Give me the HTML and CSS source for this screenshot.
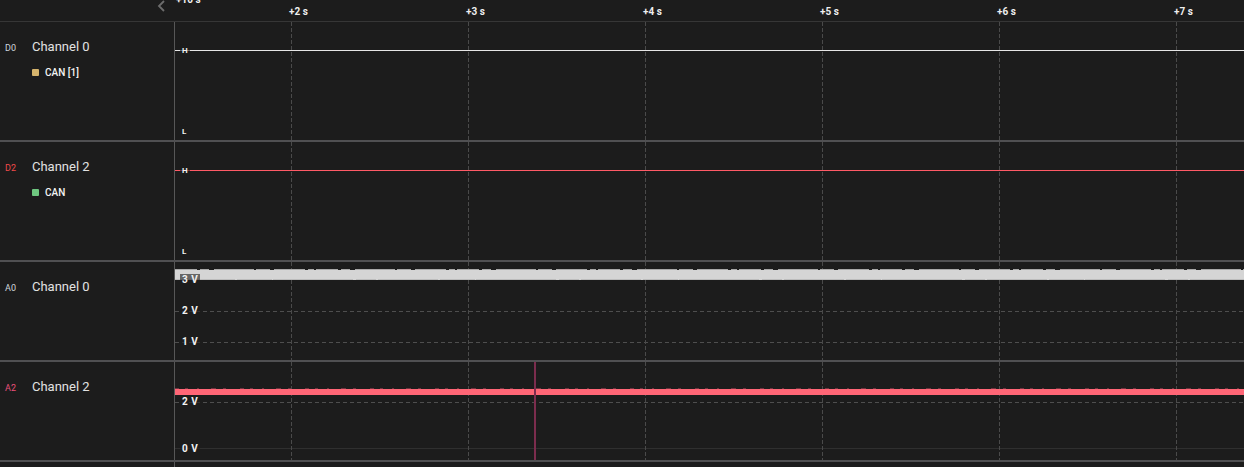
FILE: index.html
```html
<!DOCTYPE html>
<html lang="en">
<head>
    <meta charset="UTF-8">
    <title>Logic capture</title>
    <meta name="viewport" content="width=device-width, initial-scale=1.0">
    <link rel="stylesheet" href="styles.css">
</head>
<body>
<div class="app">
    <div class="ruler">
        <div class="ruler-left">
            <svg class="chevron" width="9" height="12" viewBox="0 0 9 12"><polyline points="7,1 2,6 7,11" fill="none" stroke="#6c6c6c" stroke-width="1.8"/></svg>
        </div>
        <div class="ruler-axis">
            <span class="tick start">+10 s</span>
            <span class="tick" style="left: 115px">+2 s</span>
            <span class="tick" style="left: 292px">+3 s</span>
            <span class="tick" style="left: 469px">+4 s</span>
            <span class="tick" style="left: 646px">+5 s</span>
            <span class="tick" style="left: 823px">+6 s</span>
            <span class="tick" style="left: 1000px">+7 s</span>
        </div>
    </div>

    <div class="channel digital">
        <div class="channel-info">
            <div class="channel-head">
                <span class="channel-id id-d0">D0</span>
                <span class="channel-name">Channel 0</span>
            </div>
            <div class="analyzer"><span class="swatch swatch-gold"></span>CAN [1]</div>
        </div>
        <div class="plot">
            <svg class="grid" width="100%" height="100%">
                <g class="vgrid">
                    <line x1="116.5" y1="0" x2="116.5" y2="118"/>
                    <line x1="293.5" y1="0" x2="293.5" y2="118"/>
                    <line x1="470.5" y1="0" x2="470.5" y2="118"/>
                    <line x1="647.5" y1="0" x2="647.5" y2="118"/>
                    <line x1="824.5" y1="0" x2="824.5" y2="118"/>
                    <line x1="1001.5" y1="0" x2="1001.5" y2="118"/>
                </g>
                <line x1="0" y1="28.5" x2="1100" y2="28.5" stroke="#e6e6e6" stroke-width="1"/>
            </svg>
            <span class="level" style="top: 28px">H</span>
            <span class="level" style="top: 109px">L</span>
        </div>
    </div>

    <div class="channel digital">
        <div class="channel-info">
            <div class="channel-head">
                <span class="channel-id id-d2">D2</span>
                <span class="channel-name">Channel 2</span>
            </div>
            <div class="analyzer"><span class="swatch swatch-green"></span>CAN</div>
        </div>
        <div class="plot">
            <svg class="grid" width="100%" height="100%">
                <g class="vgrid">
                    <line x1="116.5" y1="0" x2="116.5" y2="118"/>
                    <line x1="293.5" y1="0" x2="293.5" y2="118"/>
                    <line x1="470.5" y1="0" x2="470.5" y2="118"/>
                    <line x1="647.5" y1="0" x2="647.5" y2="118"/>
                    <line x1="824.5" y1="0" x2="824.5" y2="118"/>
                    <line x1="1001.5" y1="0" x2="1001.5" y2="118"/>
                </g>
                <line x1="0" y1="28.5" x2="1100" y2="28.5" stroke="#ff5a66" stroke-width="1"/>
            </svg>
            <span class="level" style="top: 28px">H</span>
            <span class="level" style="top: 109px">L</span>
        </div>
    </div>

    <div class="channel analog">
        <div class="channel-info">
            <div class="channel-head">
                <span class="channel-id id-a0">A0</span>
                <span class="channel-name">Channel 0</span>
            </div>
        </div>
        <div class="plot">
            <svg class="grid" width="100%" height="100%">
                <g class="hgrid">
                    <line x1="0" y1="49.5" x2="1100" y2="49.5"/>
                    <line x1="0" y1="80.5" x2="1100" y2="80.5"/>
                </g>
                <g class="vgrid">
                    <line x1="116.5" y1="0" x2="116.5" y2="98"/>
                    <line x1="293.5" y1="0" x2="293.5" y2="98"/>
                    <line x1="470.5" y1="0" x2="470.5" y2="98"/>
                    <line x1="647.5" y1="0" x2="647.5" y2="98"/>
                    <line x1="824.5" y1="0" x2="824.5" y2="98"/>
                    <line x1="1001.5" y1="0" x2="1001.5" y2="98"/>
                </g>
                <line x1="0" y1="7.5" x2="1100" y2="7.5" stroke="#a8a8a8" stroke-width="1" stroke-dasharray="22 3 9 5 40 2 14 4 31 3 6 2"/>
                <rect x="0" y="8" width="1100" height="10" fill="#d5d5d5"/>
                <line x1="0" y1="17.5" x2="1100" y2="17.5" stroke="#bcbcbc" stroke-width="1" stroke-dasharray="60 2 35 1 80 3 20 2"/>
            </svg>
            <span class="level volt" style="top: 18px">3 V</span>
            <span class="level volt" style="top: 49px">2 V</span>
            <span class="level volt" style="top: 80px">1 V</span>
        </div>
    </div>

    <div class="channel analog">
        <div class="channel-info">
            <div class="channel-head">
                <span class="channel-id id-a2">A2</span>
                <span class="channel-name">Channel 2</span>
            </div>
        </div>
        <div class="plot">
            <svg class="grid" width="100%" height="100%">
                <g class="hgrid">
                    <line x1="0" y1="40.5" x2="1100" y2="40.5"/>
                </g>
                <line x1="0" y1="86.5" x2="1100" y2="86.5" stroke="#2f2f2f" stroke-width="1"/>
                <g class="vgrid">
                    <line x1="116.5" y1="0" x2="116.5" y2="98"/>
                    <line x1="293.5" y1="0" x2="293.5" y2="98"/>
                    <line x1="470.5" y1="0" x2="470.5" y2="98"/>
                    <line x1="647.5" y1="0" x2="647.5" y2="98"/>
                    <line x1="824.5" y1="0" x2="824.5" y2="98"/>
                    <line x1="1001.5" y1="0" x2="1001.5" y2="98"/>
                </g>
                <line x1="0" y1="26.5" x2="1100" y2="26.5" stroke="#6e3440" stroke-width="1" stroke-dasharray="4 6 3 9 2 12 5 7 3 14"/>
                <rect x="0" y="27" width="1100" height="6" fill="#ff6676"/>
                <rect x="359" y="0" width="2" height="98" fill="#7c2d4e"/>
            </svg>
            <span class="level volt" style="top: 40px">2 V</span>
            <span class="level volt" style="top: 87px">0 V</span>
        </div>
    </div>

    <div class="channel filler">
        <div class="channel-info"></div>
        <div class="plot"></div>
    </div>
</div>
</body>
</html>
```

FILE: styles.css
```css
body {
    margin: 0;
    background: #1c1c1c;
    font-family: Roboto, "Liberation Sans", sans-serif;
    overflow: hidden;
}
.app {
    display: flex;
    flex-direction: column;
    height: 467px;
}
.ruler {
    display: flex;
    height: 21px;
    border-bottom: 1px solid #363636;
    flex: none;
}
.ruler-left {
    width: 174px;
    display: flex;
    justify-content: flex-end;
    padding-right: 8px;
    box-sizing: border-box;
}
.chevron {
    margin-top: 0;
}
.ruler-axis {
    position: relative;
    flex: 1;
    overflow: hidden;
}
.tick {
    position: absolute;
    top: 6px;
    font-size: 10px;
    font-weight: 700;
    line-height: 12px;
    color: #eeeeee;
    white-space: nowrap;
}
.tick.start {
    left: 2px;
    top: -6px;
}
.channel {
    display: flex;
    flex: none;
    border-bottom: 2px solid #505052;
}
.channel.digital {
    height: 118px;
}
.channel.analog {
    height: 98px;
}
.channel.filler {
    flex: 1;
    border-bottom: none;
}
.channel-info {
    width: 174px;
    box-sizing: border-box;
    padding: 16px 0 0 5px;
}
.channel-head {
    display: flex;
    align-items: center;
    height: 16px;
}
.channel-id {
    width: 27px;
    font-size: 9px;
    padding-top: 3px;
    letter-spacing: 0.2px;
}
.id-d0, .id-a0 {
    color: #cfd6de;
}
.id-d2 {
    color: #f04a4a;
}
.id-a2 {
    color: #e8507a;
}
.channel-name {
    font-size: 13px;
    color: #e2e2e2;
}
.analyzer {
    display: flex;
    align-items: center;
    margin: 12px 0 0 27px;
    height: 12px;
    font-size: 10px;
    font-weight: 500;
    color: #f4f4f4;
}
.swatch {
    width: 7px;
    height: 7px;
    border-radius: 1px;
    margin-right: 6px;
}
.swatch-gold {
    background: #d6b46c;
}
.swatch-green {
    background: #6fc780;
}
.plot {
    position: relative;
    flex: 1;
    border-left: 1px solid #575757;
    overflow: hidden;
}
.grid {
    position: absolute;
    left: 0;
    top: 0;
    display: block;
}
.vgrid line {
    stroke: #4a4a4a;
    stroke-width: 1;
    stroke-dasharray: 4 2;
}
.hgrid line {
    stroke: #4e4e4e;
    stroke-width: 1;
    stroke-dasharray: 4 3;
}
.level {
    position: absolute;
    left: 5px;
    transform: translateY(-50%);
    padding: 1px 2px;
    font-size: 8px;
    font-weight: 700;
    line-height: 9px;
    color: #f2f2f2;
    background: rgba(28, 28, 28, 0.6);
}
.level.volt {
    font-size: 10px;
    line-height: 10px;
    letter-spacing: 0.5px;
}
```
